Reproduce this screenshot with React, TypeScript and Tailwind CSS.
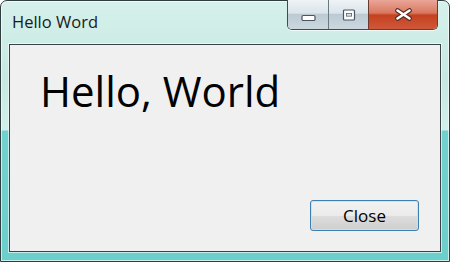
import React from "react";

function CaptionButtons() {
  return (
    <div className="flex h-[30px] overflow-hidden rounded-b-[5px] border border-t-0 border-[#3f4a52] shadow-[0_1px_0_rgba(255,255,255,0.7)]">
      <div className="flex w-[41px] items-center justify-center border-r border-[#6b7880] bg-[linear-gradient(#eef3f6_0%,#dbe4ea_45%,#bccad3_50%,#cbd8df_100%)]">
        <svg width="15" height="8" viewBox="0 0 15 8" className="mt-[6px]">
          <rect x="1" y="1.5" width="13" height="5" rx="1.2" fill="#fff" stroke="#4a5560" strokeWidth="1.2" />
        </svg>
      </div>
      <div className="flex w-[40px] items-center justify-center border-r border-[#6b3a2c] bg-[linear-gradient(#eef3f6_0%,#dbe4ea_45%,#bccad3_50%,#cbd8df_100%)]">
        <svg width="14" height="12" viewBox="0 0 14 12">
          <rect x="1.5" y="1" width="11" height="10" rx="1" fill="#fff" stroke="#4a5560" strokeWidth="1.2" />
          <rect x="4" y="4" width="6" height="3.5" fill="#4a5560" />
          <rect x="4.7" y="4.7" width="4.6" height="2.1" fill="#dde5ea" />
        </svg>
      </div>
      <div className="flex w-[68px] items-center justify-center bg-[linear-gradient(#eaa698_0%,#d9775f_45%,#c4411f_52%,#d0583a_100%)]">
        <svg width="19" height="13" viewBox="0 0 19 13">
          <path d="M3.5 2.5 L15.5 10.5 M15.5 2.5 L3.5 10.5" stroke="#4d2a22" strokeWidth="4.6" strokeLinecap="round" />
          <path d="M3.5 2.5 L15.5 10.5 M15.5 2.5 L3.5 10.5" stroke="#fff" strokeWidth="2.6" strokeLinecap="round" />
        </svg>
      </div>
    </div>
  );
}

export default function App() {
  return (
    <div className="h-[262px] w-[450px] bg-white">
      <div className="flex h-full w-full flex-col rounded-t-[7px] border border-[#2f3d3f] bg-[linear-gradient(180deg,#d6f0ea_0px,#c6e9e2_80px,#d2efea_129px,#72d1ce_130px,#6ccfcc_100%)] shadow-[inset_0_0_0_1px_rgba(255,255,255,0.65)]">
        <div className="flex h-[43px] items-start justify-between pl-[11px] pr-[11px]">
          <div className="pt-[10px] font-['Open_Sans',sans-serif] text-[16.5px] leading-[22px] text-[#1a1a1a]">
            Hello Word
          </div>
          <div className="-mt-px">
            <CaptionButtons />
          </div>
        </div>
        <div className="mx-[8px] mb-[9px] flex flex-1 flex-col border border-[#3a4446] bg-[#f0f0f0] shadow-[0_0_0_1px_rgba(255,255,255,0.6)]">
          <div className="pl-[30px] pt-[18px] font-['Open_Sans',sans-serif] text-[42px] leading-[56px] text-black">
            Hello, World
          </div>
          <div className="mt-auto flex justify-end pb-[20px] pr-[21px]">
            <button className="h-[31px] w-[109px] rounded-[3px] border border-[#3c7fb1] bg-[linear-gradient(#f2f2f2_0%,#ebebeb_50%,#dddddd_51%,#cfcfcf_100%)] font-['Open_Sans',sans-serif] text-[17px] leading-[22px] text-black shadow-[inset_0_0_0_1px_rgba(190,230,253,0.9)]">
              Close
            </button>
          </div>
        </div>
      </div>
    </div>
  );
}
